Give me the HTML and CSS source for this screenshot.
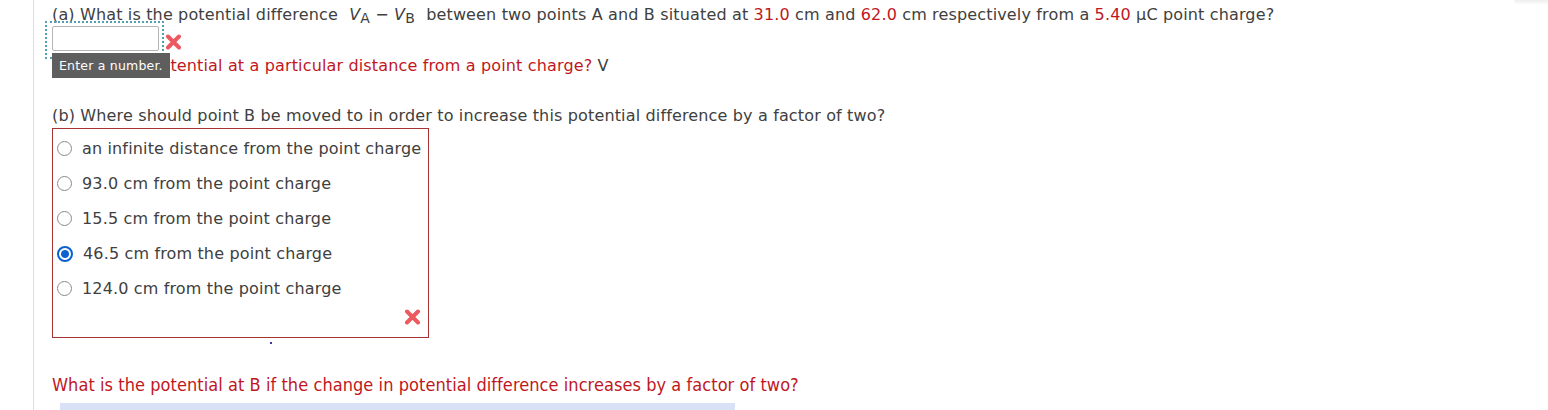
FILE: index.html
```html
<!DOCTYPE html>
<html lang="en">
<head>
  <meta charset="UTF-8" />
  <title>Electric Potential</title>
  <link rel="stylesheet" href="styles.css">
</head>
<body>
  <div class="corner-shade"></div>
  <div class="question">
    <!-- part (a) -->
    <div class="part-text">
      (a) What is the potential difference <span class="math"><i>V</i><sub>A</sub> &minus; <i>V</i><sub>B</sub></span> between two points A and B situated at <span class="given">31.0</span> cm and <span class="given">62.0</span> cm respectively from a <span class="given">5.40</span> &micro;C point charge?
    </div>
    <div class="answer-row">
      <span class="answer-focus">
        <input class="answer-input" type="text" value="">
      </span>
      <span class="mark-wrong"><svg width="17" height="16" viewBox="0 0 17 16"><path d="M3 2.5 L14 13.5 M14 2.5 L3 13.5" stroke="#ec5a5f" stroke-width="4" stroke-linecap="round"/></svg></span>
      <div class="tooltip">Enter a number.</div>
    </div>
    <div class="hint-line"><span class="hint">What is the potential at a particular distance from a point charge?</span> V</div>

    <!-- part (b) -->
    <div class="part-text part-b">(b) Where should point B be moved to in order to increase this potential difference by a factor of two?</div>
    <div class="choices">
      <label class="choice"><span class="radio"></span>an infinite distance from the point charge</label>
      <label class="choice"><span class="radio"></span>93.0 cm from the point charge</label>
      <label class="choice"><span class="radio"></span>15.5 cm from the point charge</label>
      <label class="choice"><span class="radio checked"></span>46.5 cm from the point charge</label>
      <label class="choice"><span class="radio"></span>124.0 cm from the point charge</label>
      <div class="choices-mark"><svg width="17" height="16" viewBox="0 0 17 16"><path d="M3 2.5 L14 13.5 M14 2.5 L3 13.5" stroke="#ec5a5f" stroke-width="4" stroke-linecap="round"/></svg></div>
    </div>
    <div class="dot-row"><span class="dot"></span></div>

    <div class="followup">What is the potential at B if the change in potential difference increases by a factor of two?</div>
    <div class="answer-bar"></div>
  </div>
</body>
</html>
```

FILE: styles.css
```css
body {
  margin: 0;
  background: #fff;
  font-family: "DejaVu Sans", Verdana, sans-serif;
  font-size: 16px;
  letter-spacing: 0.15px;
  color: #404040;
  overflow: hidden;
  height: 410px;
}

.corner-shade {
  position: absolute;
  top: 0;
  right: 0;
  width: 34px;
  height: 5px;
  background: linear-gradient(to bottom, #eeeeee, #fff);
  border-bottom-left-radius: 20px;
}

.question {
  margin-left: 33px;
  border-left: 1px solid #dedede;
  padding-left: 18px;
  height: 410px;
}

.part-text {
  line-height: 20px;
  padding-top: 5px;
  white-space: nowrap;
}

.math {
  margin: 0 6px;
}

.math sub {
  font-size: 14px;
  vertical-align: -3px;
  line-height: 0;
}

.given,
.hint {
  color: #c0171e;
}

.answer-row {
  position: relative;
  height: 28px;
  margin-top: -4px;
}

.answer-focus {
  display: inline-block;
  margin-left: -7px;
  padding: 5px 5px 6px 7px;
  outline: 2px dotted #55a0b0;
  outline-offset: -2px;
  height: 27px;
  vertical-align: top;
}

.answer-input {
  width: 107px;
  height: 25px;
  box-sizing: border-box;
  border: 1px solid #b5b5b5;
  border-radius: 2px;
  margin: 0;
  padding: 0 4px;
  font-family: inherit;
  font-size: 14px;
  background: #fff;
}

.mark-wrong {
  display: inline-block;
  margin-top: 13px;
  margin-left: -4px;
  vertical-align: top;
}

.tooltip {
  position: absolute;
  left: 0;
  top: 32px;
  background: #5e5e5e;
  color: #fff;
  font-size: 12.5px;
  letter-spacing: 0.2px;
  line-height: 25px;
  padding: 0 7px;
  z-index: 2;
}

.hint-line {
  line-height: 20px;
  margin-top: 7px;
}

.part-b {
  padding-top: 30px;
}

.choices {
  width: 375px;
  height: 208px;
  border: 1px solid #a83333;
  margin-top: 2px;
  position: relative;
}

.choice {
  display: flex;
  align-items: center;
  height: 35px;
  padding-left: 4px;
  white-space: nowrap;
}

.choice:first-child {
  margin-top: 2px;
}

.radio {
  width: 13px;
  height: 13px;
  border: 1.5px solid #8a8a8a;
  border-radius: 50%;
  margin-right: 10px;
  flex: none;
  background: #fff;
}

.radio.checked {
  border: 2px solid #0a62d0;
  width: 12px;
  height: 12px;
  background: radial-gradient(circle, #0a62d0 0 3.5px, #fff 4.5px);
}

.choices-mark {
  position: absolute;
  right: 7px;
  bottom: 8px;
}

.dot-row {
  height: 6px;
  position: relative;
}

.dot {
  position: absolute;
  left: 218px;
  top: 4px;
  width: 2px;
  height: 2px;
  background: #3a3aa0;
}

.followup {
  margin-top: 31px;
  font-family: "Liberation Sans Narrow", "DejaVu Sans Condensed", sans-serif;
  font-size: 18px;
  letter-spacing: 0.06px;
  color: #c0171e;
  line-height: 20px;
  white-space: nowrap;
}

.answer-bar {
  margin-top: 8px;
  margin-left: 8px;
  width: 675px;
  height: 20px;
  background: #d8e1f6;
}
```
